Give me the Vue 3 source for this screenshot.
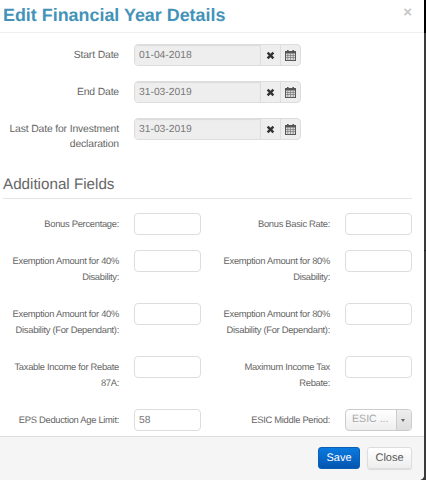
<script setup>
const dates = [
  { label: 'Start Date', value: '01-04-2018' },
  { label: 'End Date', value: '31-03-2019' },
  { label: 'Last Date for Investment declaration', value: '31-03-2019' },
]

const fieldRows = [
  { left: 'Bonus Percentage:', right: 'Bonus Basic Rate:' },
  { tall: true, left: 'Exemption Amount for 40% Disability:', right: 'Exemption Amount for 80% Disability:' },
  {
    tall: true,
    left: 'Exemption Amount for 40% Disability (For Dependant):',
    right: 'Exemption Amount for 80% Disability (For Dependant):',
  },
  { tall: true, left: 'Taxable Income for Rebate 87A:', right: 'Maximum Income Tax Rebate:' },
]
</script>

<template>
  <div class="page">
    <div class="modal">
      <header class="modal-header">
        <h3 class="modal-title">Edit Financial Year Details</h3>
        <span class="close-x">×</span>
      </header>

      <div class="modal-body">
        <div v-for="date in dates" :key="date.label" class="date-row">
          <label class="date-label">{{ date.label }}</label>
          <div class="date-group">
            <input class="date-input" type="text" :value="date.value" readonly />
            <span class="addon">
              <svg width="9" height="9" viewBox="0 0 9 9">
                <path d="M1.6 1.6 7.4 7.4M7.4 1.6 1.6 7.4" stroke="#333" stroke-width="2.4" fill="none" />
              </svg>
            </span>
            <span class="addon">
              <svg width="11" height="11" viewBox="0 0 11 11">
                <rect x="0.5" y="1.5" width="10" height="9" fill="#ddd" stroke="#555" stroke-width="1" />
                <rect x="0.5" y="1.5" width="10" height="2" fill="#555" />
                <rect x="2" y="0" width="1.6" height="2.6" fill="#555" />
                <rect x="7.4" y="0" width="1.6" height="2.6" fill="#555" />
                <path d="M0.5 5.5h10M0.5 7.5h10M2.8 3.5v7M5.5 3.5v7M8.2 3.5v7" stroke="#777" stroke-width="0.7" fill="none" />
              </svg>
            </span>
          </div>
        </div>

        <h4 class="section-title">Additional Fields</h4>

        <div v-for="row in fieldRows" :key="row.left" class="field-row" :class="{ tall: row.tall }">
          <div class="field">
            <label class="field-label">{{ row.left }}</label>
            <input class="field-input" type="text" />
          </div>
          <div class="field">
            <label class="field-label">{{ row.right }}</label>
            <input class="field-input" type="text" />
          </div>
        </div>

        <div class="field-row last">
          <div class="field">
            <label class="field-label">EPS Deduction Age Limit:</label>
            <input class="field-input" type="text" value="58" />
          </div>
          <div class="field">
            <label class="field-label">ESIC Middle Period:</label>
            <div class="fake-select">
              <span class="select-text">ESIC ...</span>
              <span class="select-arrow"></span>
            </div>
          </div>
        </div>
      </div>

      <footer class="modal-footer">
        <button type="button" class="btn btn-save">Save</button>
        <button type="button" class="btn btn-close">Close</button>
      </footer>
    </div>
  </div>
</template>

<style>
html,
body {
  margin: 0;
  background: #3a3a3a;
}
</style>

<style scoped>
.page {
  width: 426px;
  height: 480px;
  overflow: hidden;
  font-family: 'Liberation Sans', Arial, sans-serif;
  text-rendering: geometricPrecision;
  background: linear-gradient(#000 33px, #3a3a3a 33px, #3a3a3a 250px, #222 250px, #222 251px, #3a3a3a 251px);
}

.modal {
  width: 424px;
  height: 480px;
  background: #fff;
  border-bottom-right-radius: 5px;
  overflow: hidden;
  display: flex;
  flex-direction: column;
  box-sizing: border-box;
}

.modal-header {
  height: 33px;
  flex-shrink: 0;
  box-sizing: border-box;
  border-bottom: 1px solid #eee;
  display: flex;
  justify-content: space-between;
  padding: 0 12px 0 3px;
}

.modal-title {
  margin: 3px 0 0;
  font-size: 17.9px;
  line-height: 24px;
  font-weight: 700;
  color: #4393b9;
}

.close-x {
  margin-top: 1px;
  font-size: 15px;
  font-weight: 700;
  line-height: 24px;
  color: #c8c8c8;
}

.modal-body {
  flex: 1;
  overflow: hidden;
  padding-top: 11px;
}

.date-row {
  display: flex;
  height: 37px;
}

.date-row:nth-child(3) {
  height: 36px;
}

.date-label {
  width: 119px;
  margin-right: 15px;
  box-sizing: border-box;
  padding: 4px 0 0 4px;
  text-align: right;
  font-size: 10.4px;
  letter-spacing: -0.15px;
  line-height: 15px;
  color: #666;
}

.date-group {
  display: flex;
  width: 167px;
  height: 22px;
  box-sizing: border-box;
  border: 1px solid #ddd;
  border-radius: 4px;
  background: #eee;
  overflow: hidden;
}

.date-input {
  width: 126px;
  min-width: 0;
  border: 0;
  padding: 0 4px;
  box-sizing: border-box;
  background: #eee;
  font: 10.3px 'Liberation Sans', Arial, sans-serif;
  text-rendering: geometricPrecision;
  color: #777;
  outline: none;
  box-shadow: inset 0 1px 1px rgba(0, 0, 0, 0.08);
}

.addon {
  width: 20px;
  display: flex;
  align-items: center;
  justify-content: center;
  border-left: 1px solid #ddd;
  box-sizing: border-box;
}

.section-title {
  margin: 0 12px 14px 3px;
  padding-top: 20px;
  padding-bottom: 2px;
  border-bottom: 1px solid #e5e5e5;
  font-size: 15.2px;
  line-height: 22px;
  font-weight: 400;
  color: #666;
}

.field-row {
  display: flex;
  height: 37px;
}

.field-row.tall {
  height: 53px;
}

.field {
  display: flex;
  width: 211px;
}

.field-label {
  width: 119px;
  margin-right: 15px;
  box-sizing: border-box;
  padding: 3px 0 0 5px;
  text-align: right;
  font-size: 9.4px;
  letter-spacing: -0.3px;
  line-height: 15.7px;
  color: #666;
}

.field-input {
  width: 67px;
  height: 22px;
  box-sizing: border-box;
  border: 1px solid #ddd;
  border-radius: 4px;
  padding: 0 4px;
  background: #fff;
  font: 10.3px 'Liberation Sans', Arial, sans-serif;
  text-rendering: geometricPrecision;
  color: #777;
  outline: none;
}

.fake-select {
  width: 67px;
  height: 22px;
  box-sizing: border-box;
  display: flex;
  border: 1px solid #ccc;
  border-radius: 4px;
  background: linear-gradient(#fff, #eee);
  overflow: hidden;
}

.select-text {
  flex: 1;
  padding-left: 6px;
  font-size: 10.6px;
  line-height: 19px;
  color: #aaa;
}

.select-arrow {
  width: 14px;
  position: relative;
  border-left: 1px solid #ccc;
  background: linear-gradient(#eee, #ddd);
}

.select-arrow::after {
  content: '';
  position: absolute;
  left: 4px;
  top: 9px;
  border-left: 2.5px solid transparent;
  border-right: 2.5px solid transparent;
  border-top: 3px solid #666;
}

.modal-footer {
  height: 44px;
  flex-shrink: 0;
  box-sizing: border-box;
  border-top: 1px solid #ddd;
  background: #f5f5f5;
  display: flex;
  justify-content: flex-end;
  align-items: flex-start;
  gap: 7px;
  padding: 10px 12px 0 0;
}

.btn {
  height: 22px;
  padding: 0;
  box-sizing: border-box;
  border-radius: 3px;
  font: 11px 'Liberation Sans', Arial, sans-serif;
  text-rendering: geometricPrecision;
  cursor: pointer;
}

.btn-save {
  width: 42px;
  border: 1px solid #0a5fb5;
  background: linear-gradient(#0a7ae0, #0455b0);
  color: #fff;
}

.btn-close {
  width: 45px;
  border: 1px solid #ddd;
  background: linear-gradient(#fff, #eee);
  color: #555;
  box-shadow: 0 1px 1px rgba(0, 0, 0, 0.1);
}
</style>
